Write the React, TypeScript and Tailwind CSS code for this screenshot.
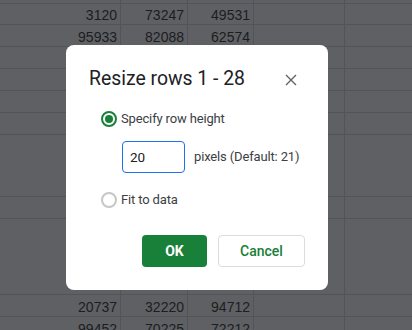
import React from "react";

const rows: { h: string; v?: [string, string, string] }[] = [
  { h: "h-[4px]" },
  { h: "h-[21px]", v: ["3120", "73247", "49531"] },
  { h: "h-[22px]", v: ["95933", "82088", "62574"] },
  { h: "h-[22px]" },
  { h: "h-[22px]" },
  { h: "h-[22px]" },
  { h: "h-[22px]" },
  { h: "h-[62px]" },
  { h: "h-[22px]" },
  { h: "h-[76px]" },
  { h: "h-[22px]", v: ["20737", "32220", "94712"] },
  { h: "h-[22px]", v: ["99452", "70225", "72212"] },
];

function Row({ h, v }: { h: string; v?: [string, string, string] }) {
  return (
    <div className={`flex ${h} shrink-0 border-b border-[#525458]`}>
      <div className="w-[121px] shrink-0 border-r border-[#525458] flex items-end justify-end pr-[3px] pb-[1px] overflow-hidden">
        {v && <span className="leading-[16px]">{v[0]}</span>}
      </div>
      <div className="w-[67px] shrink-0 border-r border-[#525458] flex items-end justify-end pr-[3px] pb-[1px] overflow-hidden">
        {v && <span className="leading-[16px]">{v[1]}</span>}
      </div>
      <div className="w-[66px] shrink-0 border-r border-[#525458] flex items-end justify-end pr-[3px] pb-[1px] overflow-hidden">
        {v && <span className="leading-[16px]">{v[2]}</span>}
      </div>
      <div className="w-[91px] shrink-0 border-r border-[#525458]" />
      <div className="flex-1" />
    </div>
  );
}

export default function App() {
  return (
    <div className="relative w-[412px] h-[330px] overflow-hidden bg-[#5e6064] text-[14px] text-[#1c1d1f] font-['Liberation_Sans',Arial,sans-serif]">
      <div className="flex flex-col h-full">
        {rows.map((r, i) => (
          <Row key={i} h={r.h} v={r.v} />
        ))}
      </div>

      <div className="absolute left-[66px] top-[45px] w-[262px] h-[245px] bg-white rounded-[8px] font-['Roboto',sans-serif] text-[#3c4043] flex flex-col">
        <div className="flex items-center justify-between pl-[23px] pr-[31px] pt-[22px]">
          <span className="text-[19.4px] leading-[24px] text-[#202124]">Resize rows 1 - 28</span>
          <svg width="12" height="12" viewBox="0 0 12 12" className="mt-[1px]">
            <path d="M1 1 L11 11 M11 1 L1 11" stroke="#5f6368" strokeWidth="1.4" />
          </svg>
        </div>

        <div className="flex items-center h-[20px] mt-[18px] pl-[35px] gap-[4px]">
          <span className="w-[16px] h-[16px] rounded-full border-2 border-[#188038] flex items-center justify-center">
            <span className="w-[8px] h-[8px] rounded-full bg-[#188038]" />
          </span>
          <span className="text-[13px] tracking-[-0.15px] leading-[20px]">Specify row height</span>
        </div>

        <div className="flex items-center mt-[12px] pl-[56px] gap-[9px]">
          <div className="w-[63px] h-[32px] rounded-[4px] border border-[#1a73e8] flex items-center pl-[7px] text-[13.5px] text-[#202124]">
            20
          </div>
          <span className="text-[13px] tracking-[-0.15px] leading-[20px]">pixels (Default: 21)</span>
        </div>

        <div className="flex items-center h-[20px] mt-[17px] pl-[35px] gap-[4px]">
          <span className="w-[16px] h-[16px] rounded-full border-2 border-[#c4c7c5]" />
          <span className="text-[13px] tracking-[-0.15px] leading-[20px]">Fit to data</span>
        </div>

        <div className="flex justify-end gap-[11px] mt-[25px] pr-[23px]">
          <div className="w-[65px] h-[32px] rounded-[4px] bg-[#188038] text-white text-[14px] font-bold flex items-center justify-center">
            OK
          </div>
          <div className="w-[87px] h-[32px] rounded-[4px] border border-[#dadce0] text-[#188038] text-[14px] font-medium flex items-center justify-center">
            Cancel
          </div>
        </div>
      </div>
    </div>
  );
}
